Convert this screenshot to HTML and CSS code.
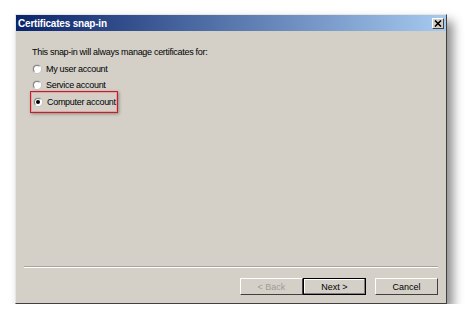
FILE: index.html
```html
<!DOCTYPE html>
<html lang="en">

<head>
    <meta charset="UTF-8">
    <meta name="viewport" content="width=device-width, initial-scale=1.0">
    <title>Certificates snap-in</title>
    <link rel="stylesheet" href="styles.css">
</head>

<body>
    <div class="window">
        <div class="titlebar">
            <span class="title">Certificates snap-in</span>
            <button class="close">
                <svg width="8" height="7" viewBox="0 0 8 7">
                    <path d="M1 0.5 L7 6.5 M7 0.5 L1 6.5" stroke="#000" stroke-width="1.6" />
                </svg>
            </button>
        </div>

        <div class="content">
            <p class="intro">This snap-in will always manage certificates for:</p>
            <div class="options">
                <label class="option"><span class="radio"></span>My user account</label>
                <label class="option"><span class="radio"></span>Service account</label>
                <label class="option selected"><span class="radio checked"></span>Computer account</label>
            </div>
        </div>

        <div class="footer">
            <div class="separator"></div>
            <div class="buttons">
                <button class="btn disabled">&lt; Back</button>
                <button class="btn default">Next &gt;</button>
                <button class="btn cancel">Cancel</button>
            </div>
        </div>
    </div>
</body>

</html>
```

FILE: styles.css
```css
* {
    margin: 0;
    padding: 0;
    box-sizing: border-box;
}

body {
    background: #fff;
    font-family: "Liberation Sans", Arial, sans-serif;
    font-size: 9px;
    color: #000;
    padding: 14px 0 0 15px;
}

.window {
    width: 432px;
    height: 290px;
    display: flex;
    flex-direction: column;
    background: #d4d0c8;
    border: 1px solid;
    border-color: #e8e6e0 #404040 #404040 #e8e6e0;
    box-shadow: 6px 7px 10px rgba(0, 0, 0, 0.45);
}

.titlebar {
    height: 16px;
    display: flex;
    align-items: center;
    justify-content: space-between;
    padding: 0 2px 0 2px;
    background: linear-gradient(to right, #0a246a, #a6caf0);
}

.title {
    color: #fff;
    font-weight: bold;
    font-size: 10px;
    letter-spacing: -0.2px;
}

.close {
    width: 12px;
    height: 11px;
    display: flex;
    align-items: center;
    justify-content: center;
    background: #d4d0c8;
    border: 1px solid;
    border-color: #fff #404040 #404040 #fff;
}

.content {
    flex: 1;
    padding: 16px 0 0 16px;
    letter-spacing: -0.3px;
}

.intro {
    margin-bottom: 6px;
}

.options {
    display: flex;
    flex-direction: column;
    gap: 4px;
}

.option {
    display: flex;
    align-items: center;
    gap: 5px;
    height: 12px;
    padding-left: 1px;
    white-space: nowrap;
}

.option.selected {
    width: 88px;
    height: 22px;
    margin-top: -4px;
    margin-left: -2px;
    padding-left: 3px;
    border: 1px solid #c0202a;
    box-shadow: 1px 1px 3px rgba(0, 0, 0, 0.35), inset 0 0 0 1px #e8a0a0;
}

.radio {
    width: 8px;
    height: 8px;
    flex-shrink: 0;
    border-radius: 50%;
    background: #fff;
    border: 1px solid;
    border-color: #808080 #fff #fff #808080;
    box-shadow: 0 0 0 1px #c8c4bc;
    display: flex;
    align-items: center;
    justify-content: center;
}

.radio.checked::after {
    content: "";
    width: 4px;
    height: 4px;
    border-radius: 50%;
    background: #000;
}

.footer {
    padding: 0 8px 8px 8px;
}

.separator {
    border-top: 1px solid #a8a49c;
    border-bottom: 1px solid #fff;
    margin-bottom: 10px;
}

.buttons {
    display: flex;
    justify-content: flex-end;
}

.btn {
    width: 63px;
    height: 17px;
    font-family: "Liberation Sans", Arial, sans-serif;
    font-size: 9px;
    background: #d4d0c8;
    border: 1px solid;
    border-color: #fff #404040 #404040 #fff;
}

.btn.disabled {
    color: #a09c94;
}

.btn.default {
    border: 1px solid #000;
    box-shadow: inset -1px -1px 0 #808080, inset 1px 1px 0 #fff;
}

.btn.cancel {
    margin-left: 9px;
}
```
